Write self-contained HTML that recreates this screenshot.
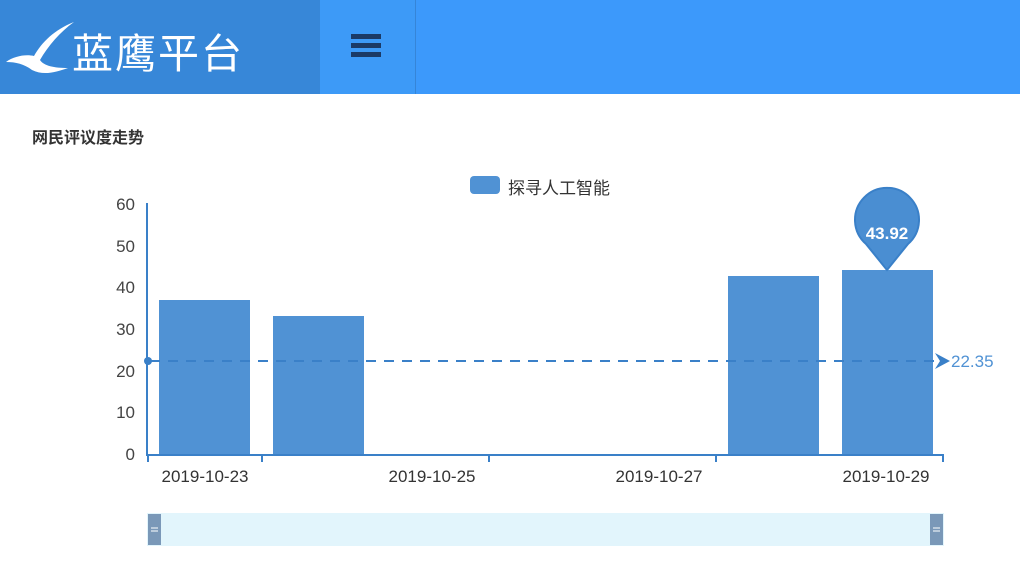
<!DOCTYPE html><html><head><meta charset="utf-8"><style>
body{margin:0;width:1020px;height:585px;background:#fff;font-family:"Liberation Sans","Noto Sans CJK SC",sans-serif;overflow:hidden;position:relative}
.h{position:absolute;left:0;top:0;width:1020px;height:94px;background:#3c99fb}
.logo{position:absolute;left:0;top:0;width:320px;height:94px;background:#3787d8}
.menu{position:absolute;left:320px;top:0;width:95px;height:94px;background:#3d9af7;border-right:1px solid #3585d8}
.t{position:absolute;left:72px;top:20px;color:#fff;font-size:41px;letter-spacing:2px}
</style></head><body>
<div class="h"></div>
<div class="logo"><svg style="position:absolute;left:4px;top:20px" width="72" height="56" viewBox="0 0 72 56"><path d="M70 2 C50 10 38 22 30 36 C22 34 10 36 2 42 C12 42 20 44 28 50 C40 56 52 52 64 48 C50 48 40 46 36 40 C44 26 56 12 70 2Z" fill="#fff"/></svg><div class="t">蓝鹰平台</div></div>
<div class="menu"><div style="position:absolute;left:31px;top:34px;width:30px;height:5px;background:#1b3a66;box-shadow:0 9px 0 #1b3a66,0 18px 0 #1b3a66"></div></div>
<div style="position:absolute;left:32px;top:124px;font-size:16px;font-weight:bold;color:#333">网民评议度走势</div>
<div style="position:absolute;left:470px;top:176px;width:30px;height:18px;background:#5092d4;border-radius:4px"></div>
<div style="position:absolute;left:508px;top:174px;font-size:17px;color:#333">探寻人工智能</div>
<svg style="position:absolute;left:0;top:0" width="1020" height="585">
<g font-size="17" fill="#444" text-anchor="end" font-family="Liberation Sans">
<text x="135" y="210">60</text><text x="135" y="252">50</text><text x="135" y="293">40</text><text x="135" y="335">30</text><text x="135" y="377">20</text><text x="135" y="418">10</text><text x="135" y="460">0</text></g>
<g fill="#5092d4"><rect x="159" y="300" width="91" height="154"/><rect x="273" y="316" width="91" height="138"/><rect x="728" y="276" width="91" height="178"/><rect x="842" y="270" width="91" height="184"/></g>
<line x1="147" y1="203" x2="147" y2="455" stroke="#3a80c8" stroke-width="2"/>
<line x1="146" y1="455" x2="944" y2="455" stroke="#3a80c8" stroke-width="2"/>
<g stroke="#3a80c8" stroke-width="2"><line x1="148" y1="455" x2="148" y2="462"/><line x1="262" y1="455" x2="262" y2="462"/><line x1="489" y1="455" x2="489" y2="462"/><line x1="716" y1="455" x2="716" y2="462"/><line x1="943" y1="455" x2="943" y2="462"/></g>
<g font-size="17" fill="#333" text-anchor="middle" font-family="Liberation Sans"><text x="205" y="482">2019-10-23</text><text x="432" y="482">2019-10-25</text><text x="659" y="482">2019-10-27</text><text x="886" y="482">2019-10-29</text></g>
<line x1="150" y1="361" x2="935" y2="361" stroke="#3a80c8" stroke-width="2" stroke-dasharray="10,8"/>
<circle cx="148" cy="361" r="4" fill="#3a80c8"/>
<path d="M935 353 L950 361 L935 369 L940 361Z" fill="#3a80c8"/>
<text x="951" y="367" font-size="17" fill="#5092d4">22.35</text>
<path d="M887 270 L866 244 A32 32 0 1 1 908 244 Z" fill="#4a8ed2" stroke="#3a80c8" stroke-width="2"/>
<text x="887" y="239" font-size="17" font-weight="bold" fill="#fff" text-anchor="middle">43.92</text>
<rect x="147" y="513" width="797" height="33" fill="#e2f5fc"/>
<rect x="148" y="514" width="13" height="31" fill="#7a98b8"/>
<rect x="930" y="514" width="13" height="31" fill="#7a98b8"/>
<g stroke="#fff"><line x1="151" y1="528" x2="158" y2="528"/><line x1="151" y1="531" x2="158" y2="531"/><line x1="933" y1="528" x2="940" y2="528"/><line x1="933" y1="531" x2="940" y2="531"/></g>
</svg>
</body></html>
